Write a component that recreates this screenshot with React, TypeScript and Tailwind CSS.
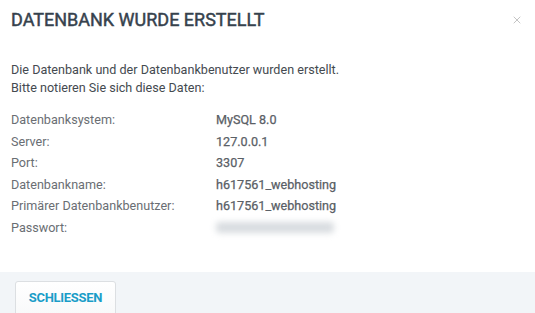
import { X } from 'lucide-react';

const rows: [string, string][] = [
	['Datenbanksystem:', 'MySQL 8.0'],
	['Server:', '127.0.0.1'],
	['Port:', '3307'],
	['Datenbankname:', 'h617561_webhosting'],
	['Primärer Datenbankbenutzer:', 'h617561_webhosting'],
];

export default function App() {
	return (
		<div className="w-[535px] h-[313px] bg-white flex flex-col overflow-hidden font-['Roboto',sans-serif]">
			{/* Kopfzeile */}
			<header className="flex items-start justify-between pl-[11px] pr-[12px] pt-[8px]">
				<h2 className="text-[18px] leading-[23px] font-normal [-webkit-text-stroke:0.45px_#36424d] text-[#36424d]">
					DATENBANK WURDE ERSTELLT
				</h2>
				<button className="mt-[6px] text-[#c4c4c4]" aria-label="Schließen">
					<X className="w-[12px] h-[12px]" strokeWidth={2} />
				</button>
			</header>

			<div className="flex-1 px-[11px] pt-[30px]">
				<p className="text-[12.6px] leading-[18px] text-[#444a50]">
					Die Datenbank und der Datenbankbenutzer wurden erstellt.
					<br />
					Bitte notieren Sie sich diese Daten:
				</p>

				<dl className="mt-[12px] grid grid-cols-[205px_1fr] text-[12.6px] leading-[21.6px]">
					{rows.map(([label, value]) => (
						<div key={label} className="contents">
							<dt className="text-[#6a6e73]">{label}</dt>
							<dd className="text-[#5a6066] [-webkit-text-stroke:0.25px_#5a6066]">{value}</dd>
						</div>
					))}
					<dt className="text-[#6a6e73]">Passwort:</dt>
					<dd className="flex items-center">
						<span className="block w-[118px] h-[11px] bg-[#d8dce0] blur-[3px] rounded-sm" />
					</dd>
				</dl>
			</div>

			{/* Fußzeile */}
			<footer className="h-[41px] bg-[#f2f5f8] pl-[15px] pt-[9px]">
				<button className="w-[101px] h-[40px] bg-gradient-to-b from-white to-[#f7f8f9] border border-[#dcdfe2] rounded-[3px] text-[13px] font-bold text-[#1a9dc8] tracking-[-0.3px] pb-[7px]">
					SCHLIESSEN
				</button>
			</footer>
		</div>
	);
}
